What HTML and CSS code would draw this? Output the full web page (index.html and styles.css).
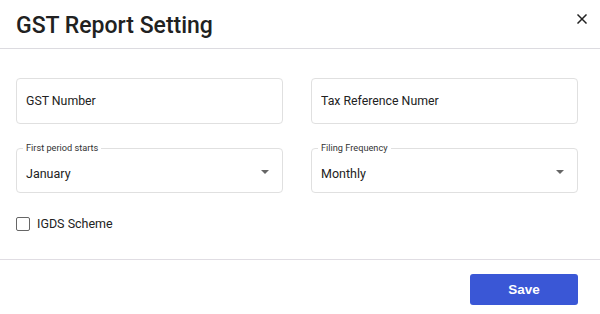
FILE: index.html
```html
<!DOCTYPE html>
<html lang="en">
<head>
    <meta charset="UTF-8">
    <meta name="viewport" content="width=device-width, initial-scale=1.0">
    <title>GST Report Setting</title>
    <link rel="stylesheet" href="styles.css">
</head>
<body>
    <div class="dialog">
        <!-- Cabecera -->
        <div class="dialog-header">
            <h1>GST Report Setting</h1>
            <button class="close-btn" aria-label="Close">
                <svg width="10" height="10" viewBox="0 0 10 10">
                    <path d="M1 1 L9 9 M9 1 L1 9" stroke="#222" stroke-width="1.5" stroke-linecap="square"/>
                </svg>
            </button>
        </div>

        <!-- Contenido -->
        <div class="dialog-body">
            <div class="form-grid">
                <input class="text-field" type="text" placeholder="GST Number">
                <input class="text-field" type="text" placeholder="Tax Reference Numer">

                <fieldset class="select-field">
                    <legend>First period starts</legend>
                    <div class="select-value">
                        <span>January</span>
                        <span class="arrow"></span>
                    </div>
                </fieldset>
                <fieldset class="select-field">
                    <legend>Filing Frequency</legend>
                    <div class="select-value">
                        <span>Monthly</span>
                        <span class="arrow"></span>
                    </div>
                </fieldset>
            </div>

            <label class="checkbox">
                <span class="box"></span>
                IGDS Scheme
            </label>
        </div>

        <!-- Pie -->
        <div class="dialog-footer">
            <button class="save-btn">Save</button>
        </div>
    </div>
</body>
</html>
```

FILE: styles.css
```css
body {
    margin: 0;
    background-color: #fff;
    font-family: 'Roboto', sans-serif;
    color: #222;
}

.dialog {
    width: 600px;
}

.dialog-header {
    display: flex;
    justify-content: space-between;
    align-items: center;
    height: 48px;
    padding: 0 12px 0 16px;
    border-bottom: 1px solid #dcdbe0;
}

.dialog-header h1 {
    margin: 0;
    margin-top: 2px;
    font-size: 23px;
    font-weight: 500;
    color: #212121;
}

.close-btn {
    background: none;
    border: none;
    padding: 0;
    width: 12px;
    height: 12px;
    display: flex;
    align-items: center;
    justify-content: center;
    margin-top: -10px;
    cursor: pointer;
}

.dialog-body {
    padding: 29px 22px 28px 16px;
}

.form-grid {
    display: grid;
    grid-template-columns: 267px 267px;
    column-gap: 28px;
    row-gap: 18px;
}

.text-field {
    box-sizing: border-box;
    height: 46px;
    padding: 0 9px;
    border: 1px solid #e0e0e0;
    border-radius: 4px;
    font-family: 'Roboto', sans-serif;
    font-size: 12.3px;
    color: #222;
    outline: none;
}

.text-field::placeholder {
    color: #222;
}

.select-field {
    margin: 0;
    padding: 0 13px 0 9px;
    height: 49px;
    border: 1px solid #e0e0e0;
    border-radius: 4px;
    min-width: 0;
}

.select-field legend {
    font-size: 9.2px;
    line-height: 12px;
    padding: 0 3px;
    margin-left: -3px;
    color: #333;
}

.select-value {
    display: flex;
    justify-content: space-between;
    align-items: center;
    height: 32px;
    margin-top: 3px;
    font-size: 12.5px;
}

.arrow {
    width: 0;
    height: 0;
    border-left: 4px solid transparent;
    border-right: 4px solid transparent;
    border-top: 4px solid #666;
    margin-top: -3px;
}

.checkbox {
    display: flex;
    align-items: center;
    gap: 7px;
    margin-top: 23px;
    font-size: 12.5px;
    color: #222;
}

.box {
    box-sizing: border-box;
    width: 14px;
    height: 14px;
    border: 1.5px solid #666;
    border-radius: 2px;
}

.dialog-footer {
    display: flex;
    justify-content: flex-end;
    padding: 14px 22px 0 0;
    border-top: 1px solid #e0dde3;
}

.save-btn {
    width: 108px;
    height: 31px;
    background-color: #3a57d6;
    color: white;
    border: none;
    border-radius: 3px;
    font-family: 'Liberation Sans', Arial, sans-serif;
    font-weight: 700;
    font-size: 13.5px;
    cursor: pointer;
}
```
